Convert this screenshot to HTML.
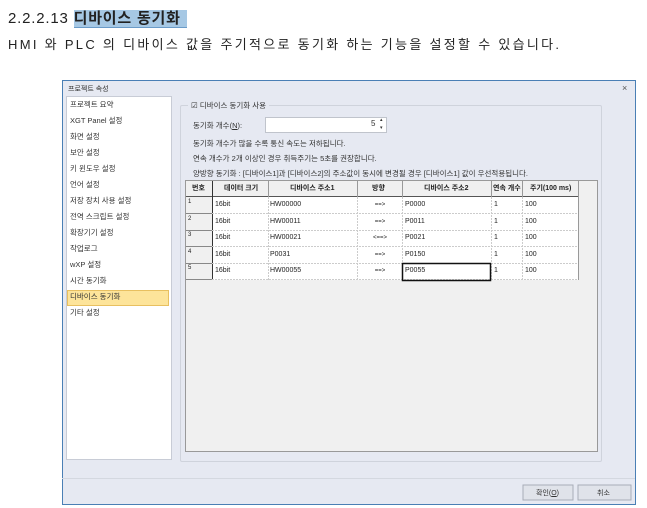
<!DOCTYPE html>
<html><head><meta charset="utf-8"><style>
*{margin:0;padding:0;box-sizing:border-box}
body{width:647px;height:508px;background:#fff;position:relative;overflow:hidden;font-family:"Liberation Sans","Noto Sans CJK KR",sans-serif}
.a{position:absolute}
.s{font-size:7.5px;color:#333;white-space:nowrap}
.c{position:absolute;font-size:7px;color:#222;white-space:nowrap;line-height:16px}
</style></head><body>
<div class="a" style="left:8px;top:7px;font-size:15px;color:#222;white-space:nowrap;letter-spacing:0.8px">2.2.2.13 <span style="background:#a6c8e4;font-weight:bold;border-bottom:1px solid #6a9bc8;padding-right:6px">디바이스 동기화</span></div>
<div class="a" style="left:8px;top:34px;font-size:13px;color:#222;white-space:nowrap;letter-spacing:2.3px">HMI 와 PLC 의 디바이스 값을 주기적으로 동기화 하는 기능을 설정할 수 있습니다.</div>

<div class="a" style="left:62px;top:80px;width:574px;height:425px;background:#e6e9f2;border:1px solid #4a7fb5"></div>
<div class="a s" style="left:68px;top:84px;font-size:7px">프로젝트 속성</div>
<div class="a s" style="left:622px;top:83px;font-size:9px;color:#555">×</div>
<div class="a" style="left:66px;top:96px;width:106px;height:364px;background:#fff;border:1px solid #c8ccd6"></div>
<div class="a" style="left:67px;top:290px;width:102px;height:16px;background:#fde49a;border:1px solid #e8c060"></div>
<div class="a" style="left:70px;top:97px;font-size:7.5px;color:#333;line-height:16px;white-space:nowrap">프로젝트 요약<br>XGT Panel 설정<br>화면 설정<br>보안 설정<br>키 윈도우 설정<br>언어 설정<br>저장 장치 사용 설정<br>전역 스크립트 설정<br>확장기기 설정<br>작업로그<br>wXP 설정<br>시간 동기화<br>디바이스 동기화<br>기타 설정</div>

<div class="a" style="left:180px;top:105px;width:422px;height:357px;border:1px solid #cfd3dc;border-radius:2px"></div>
<div class="a s" style="left:188px;top:100px;background:#e6e9f2;padding:0 3px">☑ 디바이스 동기화 사용</div>
<div class="a s" style="left:193px;top:120px">동기화 개수(<u>N</u>):</div>
<div class="a" style="left:265px;top:117px;width:122px;height:16px;background:#fff;border:1px solid #c0c4cc"></div>
<div class="a s" style="left:371px;top:119px;font-size:8px">5</div>
<div class="a s" style="left:380px;top:116px;font-size:5px;line-height:8px">▴<br>▾</div>
<div class="a s" style="left:193px;top:138px">동기화 개수가 많을 수록 통신 속도는 저하됩니다.</div>
<div class="a s" style="left:193px;top:153px">연속 개수가 2개 이상인 경우 취득주기는 5초를 권장합니다.</div>
<div class="a s" style="left:193px;top:168px">양방향 동기화 : [디바이스1]과 [디바이스2]의 주소값이 동시에 변경될 경우 [디바이스1] 값이 우선적용됩니다.</div>

<div class="a" style="left:185px;top:180px;width:413px;height:272px;background:#f0f0f0;border:1px solid #999"></div>
<div class="a" style="left:186px;top:181px;width:392px;height:16px;background:#f0f0f0;border-bottom:1px solid #555"></div>
<div class="a" style="left:212px;top:197px;width:366px;height:83px;background:#fff"></div>
<svg class="a" style="left:0;top:0" width="647" height="508">
<g stroke="#333" stroke-width="1">
<line x1="212.5" y1="181" x2="212.5" y2="280"/>
</g>
<g stroke="#999" stroke-width="1">
<line x1="268.5" y1="181" x2="268.5" y2="197"/><line x1="357.5" y1="181" x2="357.5" y2="197"/><line x1="402.5" y1="181" x2="402.5" y2="197"/><line x1="491.5" y1="181" x2="491.5" y2="197"/><line x1="522.5" y1="181" x2="522.5" y2="197"/><line x1="578.5" y1="181" x2="578.5" y2="280"/>
</g>
<g stroke="#ccc" stroke-width="1" stroke-dasharray="2,1">
<line x1="268.5" y1="197" x2="268.5" y2="280"/><line x1="357.5" y1="197" x2="357.5" y2="280"/><line x1="402.5" y1="197" x2="402.5" y2="280"/><line x1="491.5" y1="197" x2="491.5" y2="280"/><line x1="522.5" y1="197" x2="522.5" y2="280"/>
<line x1="212" y1="213.5" x2="578" y2="213.5"/><line x1="212" y1="230.5" x2="578" y2="230.5"/><line x1="212" y1="246.5" x2="578" y2="246.5"/><line x1="212" y1="263.5" x2="578" y2="263.5"/><line x1="212" y1="279.5" x2="578" y2="279.5"/>
</g>
<g stroke="#888" stroke-width="1">
<line x1="186" y1="213.5" x2="212" y2="213.5"/><line x1="186" y1="230.5" x2="212" y2="230.5"/><line x1="186" y1="246.5" x2="212" y2="246.5"/><line x1="186" y1="263.5" x2="212" y2="263.5"/><line x1="186" y1="279.5" x2="212" y2="279.5"/>
</g>
<rect x="402.5" y="263.5" width="88" height="17" fill="none" stroke="#111" stroke-width="1.5"/>
<rect x="523" y="485" width="50" height="15" fill="#e0e3ea" stroke="#a8adb8"/>
<rect x="578" y="485" width="53" height="15" fill="#e0e3ea" stroke="#a8adb8"/>
<line x1="62" y1="478.5" x2="635" y2="478.5" stroke="#d4d8e0"/>
</svg>
<div class="c" style="left:192px;top:181px;font-weight:bold">번호</div>
<div class="c" style="left:224px;top:181px;font-weight:bold">데이터 크기</div>
<div class="c" style="left:290px;top:181px;font-weight:bold">디바이스 주소1</div>
<div class="c" style="left:372px;top:181px;font-weight:bold">방향</div>
<div class="c" style="left:424px;top:181px;font-weight:bold">디바이스 주소2</div>
<div class="c" style="left:493px;top:181px;font-weight:bold">연속 개수</div>
<div class="c" style="left:530px;top:181px;font-weight:bold">주기(100 ms)</div>

<div class="a" style="left:188px;top:194px;font-size:6px;line-height:16.6px;color:#222">1<br>2<br>3<br>4<br>5</div>
<div class="a" style="left:215px;top:197px;font-size:7px;line-height:16.6px;color:#222">16bit<br>16bit<br>16bit<br>16bit<br>16bit</div>
<div class="a" style="left:270px;top:197px;font-size:7px;line-height:16.6px;color:#222">HW00000<br>HW00011<br>HW00021<br>P0031<br>HW00055</div>
<div class="a" style="left:358px;top:197px;width:44px;text-align:center;font-size:6px;line-height:16.6px;color:#222">==&gt;<br>==&gt;<br>&lt;==&gt;<br>==&gt;<br>==&gt;</div>
<div class="a" style="left:405px;top:197px;font-size:7px;line-height:16.6px;color:#222">P0000<br>P0011<br>P0021<br>P0150<br>P0055</div>
<div class="a" style="left:494px;top:197px;font-size:7px;line-height:16.6px;color:#222">1<br>1<br>1<br>1<br>1</div>
<div class="a" style="left:525px;top:197px;font-size:7px;line-height:16.6px;color:#222">100<br>100<br>100<br>100<br>100</div>

<div class="a s" style="left:536px;top:488px;font-size:7px">확인(<u>O</u>)</div>
<div class="a s" style="left:597px;top:488px;font-size:7px">취소</div>
</body></html>
